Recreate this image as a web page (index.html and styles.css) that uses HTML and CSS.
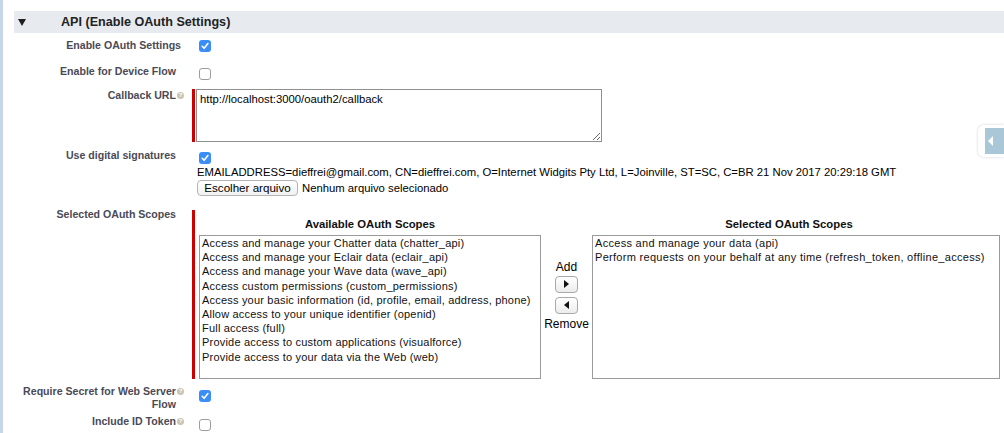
FILE: index.html
```html
<!DOCTYPE html>
<html lang="en">
<head>
    <meta charset="UTF-8">
    <title>API (Enable OAuth Settings)</title>
    <link rel="stylesheet" href="styles.css">
</head>
<body>

<div class="page">
    <div class="tab-handle"><span class="tab-inner"><span class="tab-arrow"></span></span></div>

    <div class="section">
        <div class="section-head">
            <span class="twisty"></span>
            <h3>API (Enable OAuth Settings)</h3>
        </div>

        <div class="row r-oauth">
            <div class="label">Enable OAuth Settings</div>
            <div class="field">
                <span class="cb">
                    <svg width="12" height="12" viewBox="0 0 12 12"><rect x="0" y="0" width="12" height="12" rx="3" fill="#3a8ef5"/><path d="M3.2 6.3 L5.1 8.3 L8.9 3.6" fill="none" stroke="#fff" stroke-width="1.6" stroke-linecap="round" stroke-linejoin="round"/></svg>
                </span>
            </div>
        </div>

        <div class="row r-device">
            <div class="label">Enable for Device Flow<span class="slot"></span></div>
            <div class="field">
                <span class="cb">
                    <svg width="12" height="12" viewBox="0 0 12 12"><rect x="0.5" y="0.5" width="11" height="11" rx="2.5" fill="#fff" stroke="#9d9d9d"/></svg>
                </span>
            </div>
        </div>

        <div class="row r-callback">
            <div class="label">Callback URL<span class="slot"><span class="help">?</span></span></div>
            <div class="field req">
                <textarea class="callback">http://localhost:3000/oauth2/callback</textarea>
            </div>
        </div>

        <div class="row r-sign">
            <div class="label">Use digital signatures<span class="slot"></span></div>
            <div class="field">
                <span class="cb">
                    <svg width="12" height="12" viewBox="0 0 12 12"><rect x="0" y="0" width="12" height="12" rx="3" fill="#3a8ef5"/><path d="M3.2 6.3 L5.1 8.3 L8.9 3.6" fill="none" stroke="#fff" stroke-width="1.6" stroke-linecap="round" stroke-linejoin="round"/></svg>
                </span>
                <div class="cert">EMAILADDRESS=dieffrei@gmail.com, CN=dieffrei.com, O=Internet Widgits Pty Ltd, L=Joinville, ST=SC, C=BR 21 Nov 2017 20:29:18 GMT</div>
                <div class="file-pick">
                    <span class="file-btn">Escolher arquivo</span>
                    <span class="file-name">Nenhum arquivo selecionado</span>
                </div>
            </div>
        </div>

        <div class="row r-scopes">
            <div class="label">Selected OAuth Scopes<span class="slot"></span></div>
            <div class="field req">
                <div class="scopes">
                    <div class="scope-head">Available OAuth Scopes</div>
                    <div></div>
                    <div class="scope-head sel-head">Selected OAuth Scopes</div>

                    <div class="listbox avail">
                        <div>Access and manage your Chatter data (chatter_api)</div>
                        <div>Access and manage your Eclair data (eclair_api)</div>
                        <div>Access and manage your Wave data (wave_api)</div>
                        <div>Access custom permissions (custom_permissions)</div>
                        <div>Access your basic information (id, profile, email, address, phone)</div>
                        <div>Allow access to your unique identifier (openid)</div>
                        <div>Full access (full)</div>
                        <div>Provide access to custom applications (visualforce)</div>
                        <div>Provide access to your data via the Web (web)</div>
                    </div>

                    <div class="mover">
                        <span class="mover-text">Add</span>
                        <span class="mv-btn"><span class="arr-right"></span></span>
                        <span class="mv-btn"><span class="arr-left"></span></span>
                        <span class="mover-text">Remove</span>
                    </div>

                    <div class="listbox chosen">
                        <div>Access and manage your data (api)</div>
                        <div>Perform requests on your behalf at any time (refresh_token, offline_access)</div>
                    </div>
                </div>
            </div>
        </div>

        <div class="row r-secret">
            <div class="label">Require Secret for Web Server<span class="slot"><span class="help">?</span></span><br>Flow<span class="slot"></span></div>
            <div class="field">
                <span class="cb">
                    <svg width="12" height="12" viewBox="0 0 12 12"><rect x="0" y="0" width="12" height="12" rx="3" fill="#3a8ef5"/><path d="M3.2 6.3 L5.1 8.3 L8.9 3.6" fill="none" stroke="#fff" stroke-width="1.6" stroke-linecap="round" stroke-linejoin="round"/></svg>
                </span>
            </div>
        </div>

        <div class="row r-idtoken">
            <div class="label">Include ID Token<span class="slot"><span class="help">?</span></span></div>
            <div class="field">
                <span class="cb">
                    <svg width="12" height="12" viewBox="0 0 12 12"><rect x="0.5" y="0.5" width="11" height="11" rx="2.5" fill="#fff" stroke="#9d9d9d"/></svg>
                </span>
            </div>
        </div>
    </div>
</div>

</body>
</html>
```

FILE: styles.css
```css
body {
    margin: 0;
    padding: 0;
    font-family: "Liberation Sans", Arial, sans-serif;
    background: #fff;
    color: #000;
}
.page {
    position: relative;
    border-left: 3px solid #c6d8e7;
    height: 433px;
    overflow: hidden;
}
.section {
    margin: 11px 0 0 11px;
}
.section-head {
    display: flex;
    align-items: center;
    height: 22px;
    background-color: #e7ebf0;
    padding-left: 4px;
}
.twisty {
    width: 0;
    height: 0;
    border-left: 4.5px solid transparent;
    border-right: 4.5px solid transparent;
    border-top: 7px solid #1f1f1f;
}
.section-head h3 {
    margin: 0 0 0 35px;
    font-size: 12.6px;
    font-weight: bold;
    color: #222;
}
.row {
    display: flex;
}
.label {
    width: 178px;
    flex-shrink: 0;
    box-sizing: border-box;
    padding-right: 8px;
    text-align: right;
    font-size: 10.6px;
    line-height: 12px;
    font-weight: bold;
    color: #4a4a56;
}
.r-oauth .label {
    padding-right: 11px;
}
.slot {
    display: inline-block;
    width: 8px;
    height: 8px;
    vertical-align: middle;
    position: relative;
}
.help {
    position: absolute;
    left: 1px;
    top: 0;
    width: 7px;
    height: 7px;
    border-radius: 50%;
    background: #cbc3b2;
    color: #fff;
    font-size: 6px;
    line-height: 7px;
    text-align: center;
}
.field {
    flex: 1;
    padding-left: 4px;
    font-size: 11.3px;
}
.field.req {
    border-left: 3px solid #c00;
    padding-left: 1px;
}
.cb {
    display: block;
    width: 12px;
    height: 12px;
    margin-left: 3px;
}
.cb svg {
    display: block;
}
.r-oauth {
    padding: 6px 0 7px;
}
.r-oauth .cb {
    margin-top: 1px;
}
.r-device {
    padding: 6px 0 9px;
}
.r-device .cb {
    margin-top: 3px;
}
.callback {
    display: block;
    box-sizing: border-box;
    width: 406px;
    height: 53px;
    margin: 0;
    padding: 2px 3px;
    border: 1px solid #8f8f8f;
    font-family: "Liberation Sans", Arial, sans-serif;
    font-size: 11.3px;
    line-height: 14px;
    color: #000;
}
.r-sign {
    padding: 7px 0 14px;
}
.r-sign .cb {
    margin-top: 3px;
}
.cert {
    margin: 1px 0 0 1px;
    line-height: 14px;
    white-space: nowrap;
}
.file-pick {
    display: flex;
    align-items: center;
    margin: 1px 0 0 1px;
}
.file-btn {
    box-sizing: border-box;
    width: 101px;
    height: 16px;
    line-height: 14px;
    text-align: center;
    border: 1px solid #b4b4b4;
    border-radius: 4px;
    background: linear-gradient(#fff, #f1f1f1);
    font-size: 11.6px;
}
.file-name {
    margin-left: 4px;
}
.r-scopes .label {
    margin-top: -2px;
}
.scopes {
    display: grid;
    grid-template-columns: 342px 51px 408px;
    margin-left: 3px;
}
.scope-head {
    padding-top: 7px;
    margin-bottom: 4px;
    text-align: center;
    font-weight: bold;
    line-height: 14px;
    color: #111;
}
.sel-head {
    padding-right: 14px;
}
.listbox {
    box-sizing: border-box;
    height: 144px;
    border: 1px solid #9a9a9a;
    padding: 0 2px;
    font-size: 11px;
    line-height: 14.2px;
    color: #111;
    white-space: nowrap;
    overflow: hidden;
}
.listbox.avail {
    letter-spacing: 0.2px;
}
.listbox.chosen {
    letter-spacing: 0.3px;
}
.mover {
    display: flex;
    flex-direction: column;
    align-items: center;
    padding-top: 26px;
}
.mover-text {
    line-height: 12px;
    font-size: 12px;
}
.mv-btn {
    position: relative;
    box-sizing: border-box;
    width: 23px;
    height: 17px;
    margin-top: 3px;
    border: 1px solid #a9a9a9;
    border-radius: 4px;
    background: linear-gradient(#fff, #ececec);
}
.mv-btn + .mv-btn {
    margin-top: 4px;
    margin-bottom: 4px;
}
.arr-right,
.arr-left {
    position: absolute;
    top: 3px;
    left: 8px;
    width: 0;
    height: 0;
    border-top: 4.5px solid transparent;
    border-bottom: 4.5px solid transparent;
}
.arr-right {
    border-left: 5px solid #111;
}
.arr-left {
    border-right: 5px solid #111;
}
.r-secret {
    padding-top: 6px;
}
.r-secret .label {
    line-height: 13px;
}
.r-secret .cb {
    margin-top: 5px;
}
.r-idtoken {
    padding-top: 4px;
}
.r-idtoken .cb {
    margin-top: 4px;
}
.tab-handle {
    position: absolute;
    right: 0;
    top: 125px;
    width: 26px;
    height: 32px;
    background: #fff;
    border-radius: 6px 0 0 6px;
    box-shadow: 0 0 3px rgba(0, 0, 0, 0.18);
}
.tab-inner {
    position: absolute;
    right: 0;
    top: 3px;
    width: 19px;
    height: 26px;
    background: #a9c7d6;
}
.tab-arrow {
    position: absolute;
    left: 3px;
    top: 8px;
    width: 0;
    height: 0;
    border-top: 5px solid transparent;
    border-bottom: 5px solid transparent;
    border-right: 5px solid #fff;
}
```
